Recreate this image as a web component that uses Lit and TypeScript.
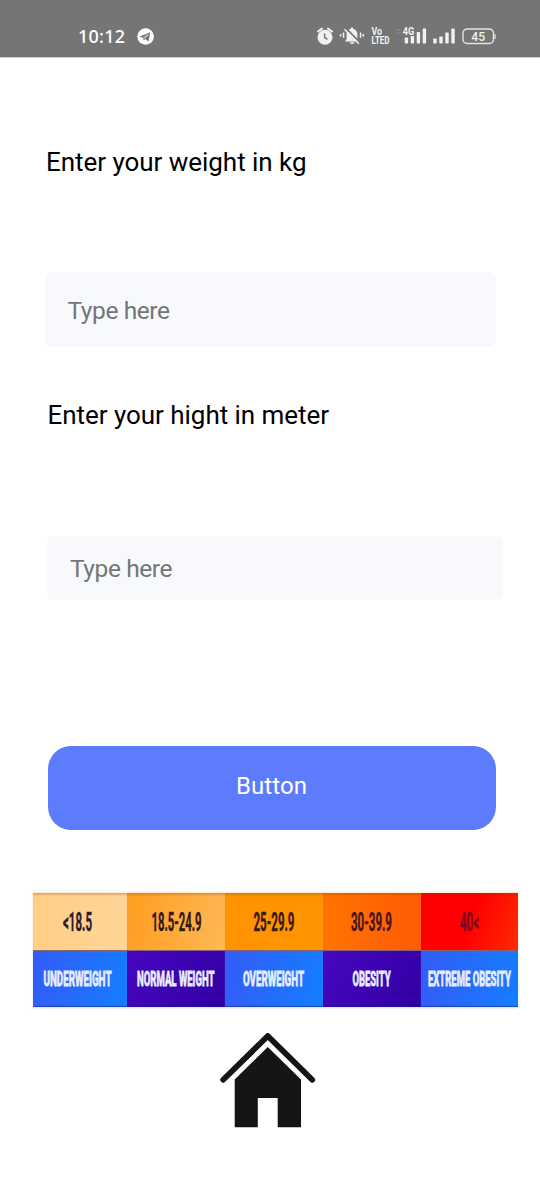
import { LitElement, html, svg, css } from "lit";
import { customElement } from "lit/decorators.js";

interface Band {
  range: string;
  rangeWidth: number;
  rangeX: number;
  name: string;
  nameWidth: number;
  nameX: number;
  tone: string;
  ink: string;
}

@customElement("status-bar")
class StatusBar extends LitElement {
  static styles = css`
    :host { display: block; height: 58px; background: #757575; border-bottom: 1px solid #d0d0d0; box-sizing: border-box; }
    svg { display: block; }
    text { font-family: Roboto, "Noto Sans", sans-serif; fill: #fff; }
    .clock { font-family: "Noto Sans", sans-serif; font-size: 18px; font-weight: 500; }
    .tiny { font-size: 10px; font-weight: 700; fill: #f1f1f1; }
    .level { font-size: 12px; font-weight: 500; fill: #f0f0f0; }
  `;

  render() {
    const bars = (x: number, heights: number[]) =>
      heights.map((h, i) => svg`<rect x=${x + i * 6} y=${43.5 - h} width="3.4" height=${h} rx="0.8" fill="#f1f1f1" />`);
    return html`
      <svg width="540" height="57" viewBox="0 0 540 57">
        <text class="clock" x="78" y="43" textLength="47">10:12</text>
        <circle cx="145.6" cy="36.5" r="8.3" fill="#fff" />
        <path d="M139.6 36.6 150.2 32.2 148.6 41.4 145.2 39 143.6 40.6 143.2 38Z" fill="#757575" />
        <path d="M143.3 38 148.3 34.3 144.6 38.7" stroke="#fff" stroke-width=".6" fill="none" />
        <circle cx="325" cy="37.2" r="7.5" fill="#f1f1f1" />
        <path d="M318 31.5 322 28.6M328 28.6 332 31.5" stroke="#f1f1f1" stroke-width="2" stroke-linecap="round" />
        <path d="M324.6 33.4V37.4L327.5 39.4" stroke="#757575" stroke-width="1.5" fill="none" />
        <path d="M345 41.6 346.6 39V34.5C346.6 31.4 348.6 29.2 351 28.8V27.6H353V28.8C355.6 29.3 357.4 31.4 357.4 34.5V39L359 41.6ZM349.6 42.3H354.6C354.2 44.4 350 44.4 349.6 42.3Z" fill="#f1f1f1" />
        <path d="M345.8 28.2 360 42.4" stroke="#757575" stroke-width="1.8" />
        <path d="M344.4 29.2 358.9 43.7" stroke="#f1f1f1" stroke-width="1.5" />
        <path d="M343.5 32.5V37.8M360.5 32.5V37.8M340.6 34V36.5M363.3 34V36.5" stroke="#f1f1f1" stroke-width="1.5" />
        <text class="tiny" x="371.5" y="35.2" textLength="10.5" lengthAdjust="spacingAndGlyphs">Vo</text>
        <text class="tiny" x="371.5" y="43.6" textLength="18" lengthAdjust="spacingAndGlyphs">LTED</text>
        <path d="M396.5 30H400.5M396.5 33H400.5" stroke="#929292" />
        ${bars(404.7, [6, 8, 11.5, 15])}
        <rect x="402" y="26.5" width="12.5" height="9.6" fill="#757575" />
        <text class="tiny" x="402.7" y="35" textLength="11.5" lengthAdjust="spacingAndGlyphs">4G</text>
        ${bars(433.3, [5, 7, 11, 15])}
        <rect x="463" y="29" width="30.5" height="14.5" rx="4.2" fill="none" stroke="#e4e4e4" stroke-width="1.4" />
        <path d="M495 34.2V38.8" stroke="#e4e4e4" stroke-width="1.3" />
        <text class="level" x="471.3" y="40.6" textLength="13.8" lengthAdjust="spacingAndGlyphs">45</text>
      </svg>
    `;
  }
}

@customElement("bmi-chart")
class BmiChart extends LitElement {
  static styles = css`
    :host { display: grid; grid-template-columns: 93.5px 98px 98px 98px 97.5px; }
    .band { display: grid; grid-template-rows: 58px 56px; }
    .range { border-bottom: 1px solid #8d6270; box-sizing: border-box; box-shadow: inset 0 3px 2px -1px #7d3b1840, 0 -1px 2px #ffb25455; }
    .name { box-shadow: inset 0 -2px 1px -1px #17206b80, 0 1px 2px #4a90ff55; }
    .underweight .range { background: linear-gradient(90deg, #ffcf86, #ffd596); }
    .normal .range { background: linear-gradient(100deg, #ff9e20, #ffb854); }
    .over .range { background: #ff9300; }
    .obese .range { background: linear-gradient(90deg, #ff7400, #ff5b05); }
    .extreme .range { background: linear-gradient(110deg, #ff0000 50%, #ff2a00); }
    .underweight .name, .over .name, .extreme .name { background: linear-gradient(100deg, #345bf8, #147eff); }
    .normal .name, .obese .name { background: linear-gradient(120deg, #4707bf, #3100a4); }
    svg { display: block; width: 100%; }
    text { font-family: Roboto, "Noto Sans", sans-serif; font-weight: 700; }
    .value { font-size: 11.5px; stroke-width: 0.2px; }
    .caption { font-size: 9px; font-weight: 800; fill: #e9edff; stroke: #e9edff; stroke-width: 0.35px; }
  `;

  private bands: Band[] = [
    { range: "<18.5", rangeWidth: 29, rangeX: 63, name: "UNDERWEIGHT", nameWidth: 68, nameX: 43.5, tone: "underweight", ink: "#2b1c2c" },
    { range: "18.5-24.9", rangeWidth: 50, rangeX: 151, name: "NORMAL WEIGHT", nameWidth: 77.5, nameX: 136.5, tone: "normal", ink: "#33191f" },
    { range: "25-29.9", rangeWidth: 41, rangeX: 253, name: "OVERWEIGHT", nameWidth: 61, nameX: 242.5, tone: "over", ink: "#3b1a1b" },
    { range: "30-39.9", rangeWidth: 41, rangeX: 350.5, name: "OBESITY", nameWidth: 38, nameX: 352, tone: "obese", ink: "#48141d" },
    { range: "40<", rangeWidth: 19, rangeX: 459.5, name: "EXTREME OBESITY", nameWidth: 83, nameX: 427.5, tone: "extreme", ink: "#7b0822" },
  ];

  render() {
    const starts = [33, 126.5, 224.5, 322.5, 420.5];
    return html`${this.bands.map((b, i) => html`
      <div class="band ${b.tone}">
        <div class="range"><svg height="57">
          <text class="value" transform="translate(${b.rangeX - starts[i]} 38) scale(1 2.17)" fill=${b.ink} stroke=${b.ink} textLength=${b.rangeWidth} lengthAdjust="spacingAndGlyphs">${b.range}</text>
        </svg></div>
        <div class="name"><svg height="56">
          <text class="caption" transform="translate(${b.nameX - starts[i]} 35.2) scale(1 2.15)" textLength=${b.nameWidth} lengthAdjust="spacingAndGlyphs">${b.name}</text>
        </svg></div>
      </div>`)}`;
  }
}

@customElement("app-root")
class AppRoot extends LitElement {
  static styles = css`
    :host { display: block; height: 1200px; overflow: hidden; background: #fff; font-family: Roboto, sans-serif; }
    main { display: flex; flex-direction: column; }
    label { display: block; font-size: 26px; line-height: 32px; letter-spacing: -0.04px; color: #000; }
    .weight-label { margin: 88px 0 0 46px; }
    .height-label { margin: 52px 0 0 47.5px; }
    input { display: block; box-sizing: border-box; border: 0; outline: 0; margin: 0; padding: 0 23px; border-radius: 6px; background: #f7f9fc; font: 24.5px Roboto, sans-serif; letter-spacing: -0.4px; color: #111; }
    input::placeholder { color: #757575; opacity: 1; }
    .weight { width: 451px; height: 75px; margin: 94px 0 0 44.5px; padding-top: 2px; }
    .height { width: 456px; height: 64px; margin: 105px 0 0 47px; }
    button { width: 448px; height: 84px; margin: 146px 0 0 47.5px; padding: 0 0 4px; border: 0; border-radius: 23px; background: #5d7bfd; color: #fff; font: 24px Roboto, sans-serif; letter-spacing: 0.1px; }
    bmi-chart { margin: 63px 0 0 33px; }
    .home { display: block; margin: 26px 0 0 220px; }
  `;

  render() {
    return html`
      <status-bar></status-bar>
      <main>
        <label class="weight-label" for="weight">Enter your weight in kg</label>
        <input id="weight" class="weight" placeholder="Type here" />
        <label class="height-label" for="height">Enter your hight in meter</label>
        <input id="height" class="height" placeholder="Type here" />
        <button>Button</button>
        <bmi-chart></bmi-chart>
        <svg class="home" width="96" height="96" viewBox="0 0 96 96">
          <path d="M3.2 46.8 47.8 3 92.2 46.8" fill="none" stroke="#151515" stroke-width="5.8" stroke-linecap="round" stroke-linejoin="round" />
          <path d="M14.7 46.5 47.8 14 81 46.5V94.2H57.7V65H37.8V94.2H14.7Z" fill="#151515" />
        </svg>
      </main>
    `;
  }
}
